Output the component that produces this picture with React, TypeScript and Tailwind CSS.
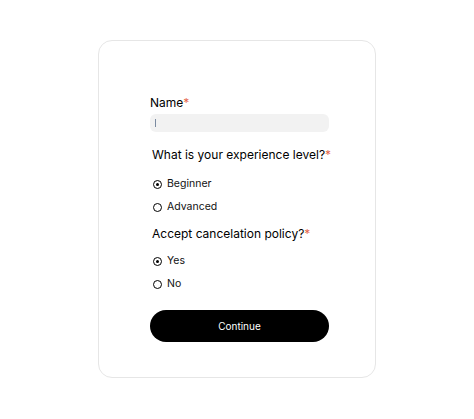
import { useState } from "react"

function Radio({ label, checked, onClick }: { label: string; checked: boolean; onClick: () => void }) {
  return (
    <button type="button" onClick={onClick} className="flex h-[16px] items-center gap-[5px] text-left">
      <span className="flex size-[9px] items-center justify-center rounded-full border-[1.3px] border-black">
        {checked && <span className="size-[3px] rounded-full bg-black" />}
      </span>
      <span className="text-[10.5px] text-[#111]">{label}</span>
    </button>
  )
}

export default function App() {
  const [level, setLevel] = useState("beginner")
  const [policy, setPolicy] = useState("yes")

  return (
    <div className="flex min-h-screen items-start justify-center bg-white pt-[40px] font-['Inter',sans-serif] text-black">
      <div className="h-[338px] w-[278px] rounded-[14px] border border-[#e6e6e6] pl-[51px] pt-[54px]">
        <label className="block text-[12px] leading-[16px]">
          Name<span className="text-[#e5664a]">*</span>
        </label>
        <div className="mt-[3px] flex h-[18px] w-[179px] items-center rounded-[6px] bg-[#f2f2f2] px-[5px]">
          <span className="h-[8px] w-px bg-[#7a8aa0]" />
        </div>

        <p className="mt-[15px] pl-[2px] text-[12px] leading-[16px]">
          What is your experience level?<span className="text-[#e5664a]">*</span>
        </p>
        <div className="mt-[13px] flex flex-col gap-[7px] pl-[3px]">
          <Radio label="Beginner" checked={level === "beginner"} onClick={() => setLevel("beginner")} />
          <Radio label="Advanced" checked={level === "advanced"} onClick={() => setLevel("advanced")} />
        </div>

        <p className="mt-[11px] pl-[2px] text-[12px] leading-[16px]">
          Accept cancelation policy?<span className="text-[#e5664a]">*</span>
        </p>
        <div className="mt-[11px] flex flex-col gap-[7px] pl-[3px]">
          <Radio label="Yes" checked={policy === "yes"} onClick={() => setPolicy("yes")} />
          <Radio label="No" checked={policy === "no"} onClick={() => setPolicy("no")} />
        </div>

        <button
          type="button"
          className="mt-[18px] h-[32px] w-[179px] rounded-full bg-black text-[10px] text-white"
        >
          Continue
        </button>
      </div>
    </div>
  )
}
